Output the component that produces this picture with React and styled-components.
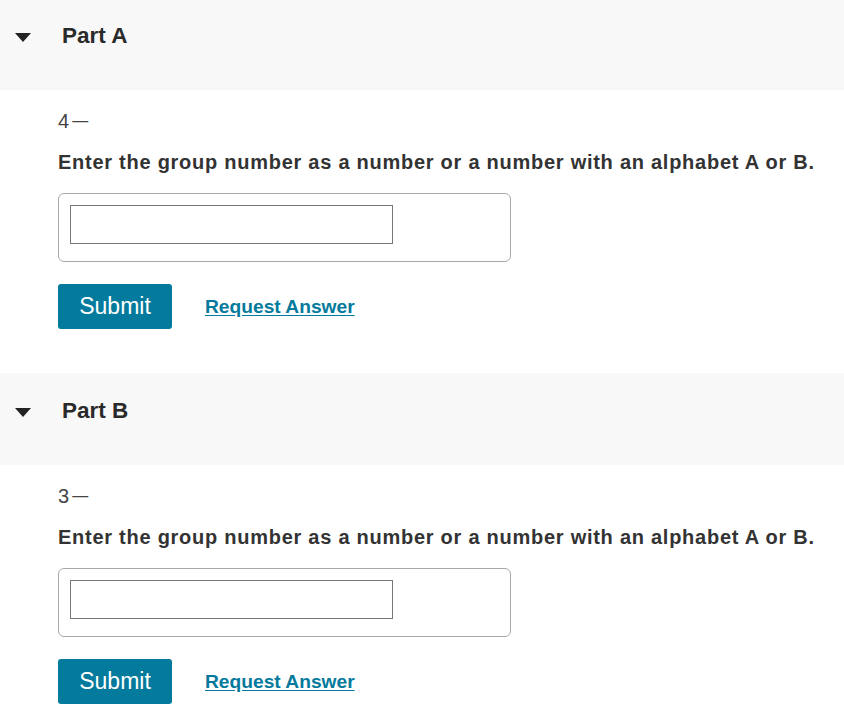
import React, { Fragment } from "react";
import styled, { createGlobalStyle } from "styled-components";

const parts = [
  { label: "Part A", charge: "4" },
  { label: "Part B", charge: "3" }
];

const QUESTION =
  "Enter the group number as a number or a number with an alphabet A or B.";

const App = () => (
  <Fragment>
    <GlobalStyle />
    <Page>
      {parts.map(part => (
        <Section key={part.label}>
          <PartHeader>
            <Caret />
            <PartTitle>{part.label}</PartTitle>
          </PartHeader>
          <PartBody>
            <Charge>
              {part.charge}
              <Dash>—</Dash>
            </Charge>
            <Question>{QUESTION}</Question>
            <AnswerBox>
              <AnswerInput type="text" aria-label={`${part.label} answer`} />
            </AnswerBox>
            <Actions>
              <SubmitButton>Submit</SubmitButton>
              <RequestLink href="#">Request Answer</RequestLink>
            </Actions>
          </PartBody>
        </Section>
      ))}
    </Page>
  </Fragment>
);

export default App;

const GlobalStyle = createGlobalStyle`
  body {
    margin: 0;
    background: #ffffff;
    font-family: "Liberation Sans", Arial, sans-serif;
    color: #333333;
  }
`;

const Page = styled.div`
  margin-top: -2px;
  display: flex;
  flex-direction: column;
`;

const Section = styled.section`
  display: flex;
  flex-direction: column;
`;

const PartHeader = styled.div`
  height: 92px;
  background: #f8f8f8;
  display: flex;
  align-items: center;
  padding-left: 15px;
  padding-bottom: 16px;
  box-sizing: border-box;
`;

const Caret = styled.span`
  width: 0;
  height: 0;
  border-left: 8.5px solid transparent;
  border-right: 8.5px solid transparent;
  border-top: 9px solid #222222;
  margin-top: 2px;
`;

const PartTitle = styled.h2`
  margin: 0 0 0 31px;
  font-size: 22.5px;
  font-weight: bold;
  color: #2a2a2a;
`;

const PartBody = styled.div`
  display: flex;
  flex-direction: column;
  align-items: flex-start;
  padding: 20px 0 44px 58px;
`;

const Charge = styled.div`
  font-size: 20px;
  line-height: 22px;
  color: #444444;
  display: flex;
  align-items: center;
`;

const Dash = styled.span`
  font-size: 16px;
  margin-left: 3px;
`;

const Question = styled.p`
  margin: 18px 0 0;
  font-size: 20px;
  line-height: 24px;
  font-weight: bold;
  letter-spacing: 0.74px;
  color: #333333;
  white-space: nowrap;
`;

const AnswerBox = styled.div`
  margin-top: 19px;
  width: 453px;
  box-sizing: border-box;
  border: 1px solid #aaaaaa;
  border-radius: 6px;
  padding: 11px 11px 17px;
  display: flex;
`;

const AnswerInput = styled.input`
  width: 323px;
  height: 39px;
  box-sizing: border-box;
  border: 1px solid #777777;
  border-radius: 0;
  margin: 0;
  padding: 0 6px;
  font-size: 18px;
  font-family: inherit;
  background: #ffffff;
  outline: none;
`;

const Actions = styled.div`
  margin-top: 22px;
  display: flex;
  align-items: center;
  gap: 33px;
`;

const SubmitButton = styled.button`
  width: 114px;
  height: 45px;
  border: none;
  border-radius: 3px;
  background: #047a9c;
  color: #ffffff;
  font-family: "Liberation Sans", Arial, sans-serif;
  font-size: 23px;
  padding: 0;
  cursor: pointer;
`;

const RequestLink = styled.a`
  font-size: 19.2px;
  font-weight: bold;
  color: #047a9c;
  text-decoration: underline;
  text-underline-offset: 2px;
`;
